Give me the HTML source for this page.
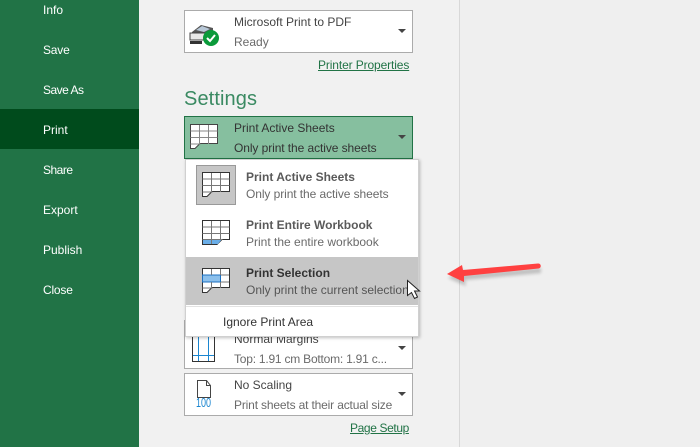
<!DOCTYPE html>
<html><head><meta charset="utf-8"><style>
html,body{margin:0;padding:0}
body{width:700px;height:447px;overflow:hidden;background:#f1f1f1;position:relative;font-family:"Liberation Sans",sans-serif;font-size:12px;color:#444}
.a{position:absolute;white-space:nowrap}
#side{left:0;top:0;width:139px;height:447px;background:#217346}
#sel{left:0;top:109px;width:139px;height:40px;background:#004b1c}
.n{left:43px;color:#fff;font-size:12px;line-height:16px}
.box{left:184px;width:227px;height:41px;background:#fff;border:1px solid #ababab}
.t{line-height:16px;font-size:12px}
.g{color:#6a6a6a}
.l{color:#217346;text-decoration:underline;font-size:12px;line-height:16px}
.arr{width:0;height:0;border-left:4px solid transparent;border-right:4px solid transparent;border-top:4px solid #444}
.b{font-weight:bold;color:#5a5a5a}
svg{position:absolute;overflow:visible}
</style></head><body>
<div class="a" style="left:459px;top:0;width:241px;height:447px;background:#efefef;border-left:1px solid #d8d8d8"></div>
<div class="a" id="side"></div><div class="a" id="sel"></div>
<div class="a n" style="top:2px">Info</div>
<div class="a n" style="top:42px;letter-spacing:-.2px">Save</div>
<div class="a n" style="top:82px;letter-spacing:-.5px">Save As</div>
<div class="a n" style="top:122px">Print</div>
<div class="a n" style="top:162px;letter-spacing:-.5px">Share</div>
<div class="a n" style="top:202px">Export</div>
<div class="a n" style="top:242px">Publish</div>
<div class="a n" style="top:282px;letter-spacing:-.2px">Close</div>

<div class="a box" style="top:10px"></div>
<svg style="left:189px;top:23px" width="32" height="24" viewBox="0 0 32 24">
<path d="M3 9L12 2l12 3 0 9H3z" fill="#555"/><path d="M7 7l6-4 8 3-6 3z" fill="#b8c8d8"/><path d="M1 10h15v7H1z" fill="#e8e8e8" stroke="#444"/><path d="M1 18h12v3H1z" fill="#333"/>
<circle cx="22" cy="15" r="8" fill="#0a9a3a"/><path d="M18 15l3 3 5-6" fill="none" stroke="#fff" stroke-width="2"/></svg>
<div class="a t" style="left:234px;top:14px;color:#444">Microsoft Print to PDF</div>
<div class="a t g" style="left:234px;top:34px">Ready</div>
<div class="a arr" style="left:398px;top:29px"></div>
<div class="a l" style="left:318px;top:57px;letter-spacing:-.12px">Printer Properties</div>
<div class="a" style="left:184px;top:86px;font-size:20px;line-height:26px;color:#3a8a62;letter-spacing:.1px">Settings</div>

<div class="a box" style="top:116px;background:#86bf9f;border-color:#217346"></div>
<svg style="left:190px;top:124px" width="30" height="26" viewBox="0 0 30 26"><path d="M.5.500h27v19H10l-5 5H.5z" fill="#fff" stroke="#444"/><path d="M.5 7h27M.5 13.500h27M.5 20h10M9.500 1v19M18.500 1v19" stroke="#888" fill="none"/></svg>
<div class="a t" style="left:234px;top:120px;color:#333">Print Active Sheets</div>
<div class="a t" style="left:234px;top:140px;color:#333;letter-spacing:-.08px">Only print the active sheets</div>
<div class="a arr" style="left:398px;top:135px"></div>

<div class="a box" style="top:320px;height:47px"></div>
<svg style="left:192px;top:330px" width="24" height="32" viewBox="0 0 24 32"><path d="M.5.500h22v31H.5z" fill="#fff" stroke="#333"/><path d="M6.500 1v30M16.500 1v30M1 25.500h21" stroke="#1b86d0" fill="none"/></svg>
<div class="a t" style="left:234px;top:331px">Normal Margins</div>
<div class="a t g" style="left:234px;top:351px;letter-spacing:-.22px">Top: 1.91 cm Bottom: 1.91 c...</div>
<div class="a arr" style="left:398px;top:346px"></div>

<div class="a box" style="top:373px"></div>
<svg style="left:197px;top:380px" width="15" height="18" viewBox="0 0 15 18"><path d="M.5.500h9l4 5v12H.5zM9.500.5v5h4" fill="#fff" stroke="#444"/></svg>
<div class="a" style="left:196px;top:397px;font-size:12.500px;line-height:13px;color:#1b86d0;transform:scaleX(.72);transform-origin:0 0">100</div>
<div class="a t" style="left:234px;top:377px">No Scaling</div>
<div class="a t g" style="left:234px;top:397px;letter-spacing:-.16px">Print sheets at their actual size</div>
<div class="a arr" style="left:398px;top:392px"></div>
<div class="a l" style="left:350px;top:420px;letter-spacing:-.38px">Page Setup</div>

<div class="a" style="left:185px;top:159px;width:232px;height:176px;background:#fff;border:1px solid #d0d0d0;box-shadow:1px 1px 3px rgba(0,0,0,.25)"></div>
<div class="a" style="left:196px;top:165px;width:38px;height:38px;background:#c6c6c6;border:1px solid #999"></div>
<svg style="left:202px;top:172px" width="28" height="26" viewBox="0 0 28 26"><path d="M.5.500h27v19H10l-5 5H.5z" fill="#fff" stroke="#333"/><path d="M.5 7h27M.5 13.500h27M.5 20h10M9.500 1v19M18.500 1v19" stroke="#777" fill="none"/></svg>
<div class="a t b" style="left:246px;top:169px">Print Active Sheets</div>
<div class="a t g" style="left:246px;top:186px;letter-spacing:-.08px">Only print the active sheets</div>

<svg style="left:202px;top:220px" width="28" height="26" viewBox="0 0 28 26"><path d="M.5.500h27v19H20l-5 5H.5z" fill="#fff" stroke="#333"/><path d="M1 19h19l-4 5H1z" fill="#6aaee8"/><path d="M.5 7h27M.5 13.500h27M.5 19.500h20M9.500 1v23M18.500 1v19" stroke="#777" fill="none"/></svg>
<div class="a t b" style="left:246px;top:217px">Print Entire Workbook</div>
<div class="a t g" style="left:246px;top:234px">Print the entire workbook</div>

<div class="a" style="left:186px;top:257px;width:232px;height:48px;background:#c6c6c6"></div>
<svg style="left:202px;top:268px" width="28" height="26" viewBox="0 0 28 26"><path d="M.5.500h27v19H10l-5 5H.5z" fill="#fff" stroke="#333"/><path d="M.5 7h18v7H.5z" fill="#8cc0ec" stroke="#1b6fc0"/><path d="M.5 20h10M9.500 1v6M18.500 1v6M18.500 14v6M9.500 14v6M19 14h8M19 7h8" stroke="#777" fill="none"/></svg>
<div class="a t" style="left:246px;top:265px;font-weight:bold;color:#333">Print Selection</div>
<div class="a t" style="left:246px;top:282px;width:162px;overflow:hidden;color:#555">Only print the current selection</div>
<div class="a" style="left:186px;top:306px;width:232px;height:1px;background:#e2e2e2"></div>
<div class="a t" style="left:223px;top:314px;color:#333">Ignore Print Area</div>

<svg style="left:407px;top:280px" width="14" height="20" viewBox="0 0 14 20"><path d="M.5.500v15l4-3 3 6 3-1.500-3-6h5z" fill="#fff" stroke="#222"/></svg>
<svg style="left:0;top:0" width="700" height="447" viewBox="0 0 700 447"><path d="M447 276l15-9 1 5 77-6v5l-76 7 1 6z" fill="#000" opacity=".2" transform="translate(1 2)" style="filter:blur(1.500px)"/><path d="M447 274l15-9 1 5 75-6.500a2.500 2.500 0 0 1 .5 5L464 276l0 6z" fill="#ff4040"/></svg>
</body></html>
